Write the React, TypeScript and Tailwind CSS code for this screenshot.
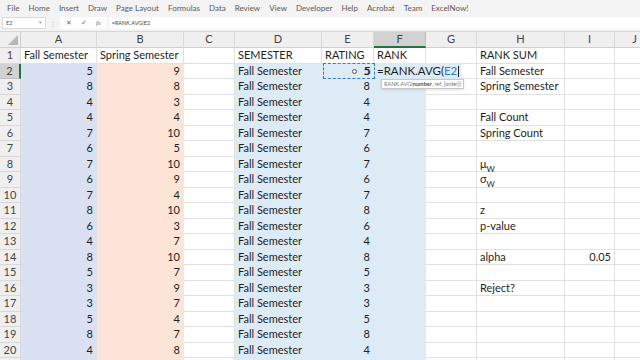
import React from "react";

const cols = [
  { key: "A", w: 76 },
  { key: "B", w: 87 },
  { key: "C", w: 51 },
  { key: "D", w: 87 },
  { key: "E", w: 52 },
  { key: "F", w: 52 },
  { key: "G", w: 51 },
  { key: "H", w: 88 },
  { key: "I", w: 50 },
  { key: "J", w: 40 },
];

const menu = [
  "File",
  "Home",
  "Insert",
  "Draw",
  "Page Layout",
  "Formulas",
  "Data",
  "Review",
  "View",
  "Developer",
  "Help",
  "Acrobat",
  "Team",
  "ExcelNow!",
];

const fall = [5, 8, 4, 4, 7, 6, 7, 6, 7, 8, 6, 4, 8, 5, 3, 3, 5, 8, 4];
const spring = [9, 8, 3, 4, 10, 5, 10, 9, 4, 10, 3, 7, 10, 7, 9, 7, 4, 7, 8];

const hLabels: Record<number, React.ReactNode> = {
  1: "RANK SUM",
  2: "Fall Semester",
  3: "Spring Semester",
  5: "Fall Count",
  6: "Spring Count",
  8: (
    <span>
      μ<sub className="text-[8px] align-[-2px]">W</sub>
    </span>
  ),
  9: (
    <span>
      σ<sub className="text-[8px] align-[-2px]">W</sub>
    </span>
  ),
  11: "z",
  12: "p-value",
  14: "alpha",
  16: "Reject?",
};

const fills: Record<string, string> = {
  A: "bg-[#d9e1f2] border-[#d9e1f2]",
  B: "bg-[#fce4d6] border-[#fce4d6]",
  D: "bg-[#ddebf7] border-[#ddebf7]",
  E: "bg-[#ddebf7] border-[#ddebf7]",
  F: "bg-[#ddebf7] border-[#ddebf7]",
};

function cellContent(col: string, row: number): { text: React.ReactNode; right?: boolean } {
  if (row === 1) {
    const head: Record<string, string> = {
      A: "Fall Semester",
      B: "Spring Semester",
      D: "SEMESTER",
      E: "RATING",
      F: "RANK",
      H: "RANK SUM",
    };
    return { text: head[col] ?? "" };
  }
  const i = row - 2;
  if (i < 19) {
    if (col === "A") return { text: fall[i], right: true };
    if (col === "B") return { text: spring[i], right: true };
    if (col === "D") return { text: "Fall Semester" };
    if (col === "E") return { text: fall[i], right: true };
  }
  if (col === "H") return { text: hLabels[row] ?? "" };
  if (col === "I" && row === 14) return { text: "0.05", right: true };
  return { text: "" };
}

function Cell({ col, w, row }: { col: string; w: number; row: number }) {
  const filled = row > 1 && fills[col];
  const { text, right } = cellContent(col, row);
  return (
    <div
      style={{ width: w }}
      className={`shrink-0 h-full border-r border-b px-[3px] flex items-center whitespace-nowrap ${
        filled ? fills[col] : "bg-white border-[#e1e1e1]"
      } ${right ? "justify-end" : "justify-start"}`}
    >
      {text}
    </div>
  );
}

export default function App() {
  const rows = Array.from({ length: 21 }, (_, i) => i + 1);
  return (
    <div className="w-[640px] h-[360px] overflow-hidden bg-white font-['Lato','Liberation_Sans',sans-serif] text-[11px] text-[#1e1e1e]">
      {/* ribbon tabs */}
      <div className="h-[16px] bg-[#f3f3f3] flex items-center gap-[9px] pl-[7px] text-[8px] text-[#5a5a5a]">
        {menu.map((m) => (
          <span key={m}>{m}</span>
        ))}
      </div>

      {/* formula bar */}
      <div className="h-[16px] bg-[#f3f3f3] flex items-center border-b border-[#d6d6d6] pb-[1px]">
        <div className="ml-[2px] w-[44px] h-[12px] bg-white border border-[#dcdcdc] flex items-center justify-between px-[3px] text-[5.5px] text-[#555]">
          <span>E2</span>
          <span className="text-[5px] text-[#999]">▾</span>
        </div>
        <span className="mx-[4px] text-[6px] text-[#bbb]">⋮</span>
        <div className="h-[12px] flex items-center gap-[9px] px-[6px] bg-white text-[6.5px] text-[#666]">
          <span>✕</span>
          <span>✓</span>
          <span className="italic font-['Liberation_Serif',serif]">fx</span>
        </div>
        <div className="ml-[2px] h-[12px] flex-1 bg-white flex items-center pl-[3px] text-[5.5px] text-[#444]">
          =RANK.AVG(E2
        </div>
      </div>

      {/* column headers */}
      <div className="h-[16px] flex bg-[#efefef] text-[11px] text-[#444]">
        <div className="w-[21px] shrink-0 h-full relative border-r border-b border-[#d0d0d0]">
          <svg className="absolute right-[2px] bottom-[2px]" width="10" height="10" viewBox="0 0 10 10">
            <polygon points="10,0 10,10 0,10" fill="#b8b8b8" />
          </svg>
        </div>
        {cols.map((c) => (
          <div
            key={c.key}
            style={{ width: c.w }}
            className={`shrink-0 h-full flex items-center justify-center border-r ${
              c.key === "F"
                ? "bg-[#d2d2d2] border-[#bdbdbd] border-b-2 border-b-[#217346]"
                : "border-[#d8d8d8] border-b border-b-[#d0d0d0]"
            }`}
          >
            {c.key}
          </div>
        ))}
      </div>

      {/* grid */}
      <div className="relative">
        {rows.map((r) => (
          <div key={r} className="h-[15.5px] flex">
            <div
              className={`w-[21px] shrink-0 h-full flex items-center justify-center border-r border-b text-[#444] ${
                r === 2
                  ? "bg-[#d2d2d2] border-[#bdbdbd] border-r-2 border-r-[#217346]"
                  : "bg-[#efefef] border-[#d8d8d8]"
              }`}
            >
              {r <= 20 ? r : ""}
            </div>
            {cols.map((c) => (
              <Cell key={c.key} col={c.key} w={c.w} row={r} />
            ))}
          </div>
        ))}

        {/* E2 reference marquee */}
        <div className="absolute left-[323px] top-[15px] w-[52px] h-[16px] border border-dashed border-[#3a78c9] flex items-center justify-end pr-[3px]">
          <span className="absolute left-[28px] top-[5px] w-[5px] h-[5px] rounded-full border border-[#555] bg-white" />
          <span>5</span>
        </div>

        {/* F2 editing text */}
        <div className="absolute left-[375px] top-[15px] h-[16px] flex items-center pl-[2px] pr-[2px] bg-[#ddebf7] text-[11.5px] whitespace-nowrap">
          <span>=RANK.AVG(</span>
          <span className="text-[#3a78c9]">E2</span>
          <span className="ml-[1px] w-[1px] h-[11px] bg-[#222]" />
        </div>

        {/* function tooltip */}
        <div className="absolute left-[381px] top-[31px] h-[10px] px-[2px] flex items-center bg-white border border-[#c8c8c8] text-[5.5px] text-[#777] whitespace-nowrap shadow-sm">
          RANK.AVG(<span className="font-bold text-[#555]">number</span>, ref, [order])
        </div>
      </div>
    </div>
  );
}
